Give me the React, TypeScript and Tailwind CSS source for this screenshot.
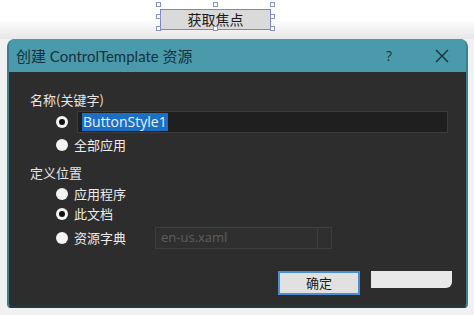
import React from 'react';

const cjk = '"Noto Sans CJK SC", "Noto Sans", sans-serif';
const latin = '"Open Sans", "Noto Sans CJK SC", sans-serif';
const title = 'Lato, "Noto Sans CJK SC", sans-serif';

type RadioProps = { checked?: boolean; label: string };

const Radio: React.FC<RadioProps> = ({ checked = false, label }) => (
  <div className="flex items-center gap-[6px]">
    <span className="w-[12px] h-[12px] rounded-full bg-[#f4f4f4] flex items-center justify-center">
      {checked && <span className="w-[6px] h-[6px] rounded-full bg-[#111]" />}
    </span>
    <span className="text-[13px] leading-[18px] text-[#ececec]">{label}</span>
  </div>
);

const Handle: React.FC<{ className: string }> = ({ className }) => (
  <span className={`absolute w-[5px] h-[5px] bg-white border border-[#8a8fc4] ${className}`} />
);

export default function App() {
  return (
    <div className="w-[474px] h-[315px] bg-[#f1f1f1] overflow-hidden" style={{ fontFamily: cjk }}>
      {/* designer surface */}
      <div className="h-[39px] bg-gradient-to-b from-white via-white to-[#e6e6e6] pl-[160px] pt-[6px]">
        <div className="relative w-[111px] h-[21px]">
          <button className="w-full h-full bg-[#dadada] border border-[#7f84c0] text-[14px] leading-[19px] text-[#1a1a1a]">
            获取焦点
          </button>
          <Handle className="-left-[4px] -top-[4px]" />
          <Handle className="left-[53px] -top-[4px]" />
          <Handle className="-right-[4px] -top-[4px]" />
          <Handle className="-left-[4px] top-[8px]" />
          <Handle className="-right-[4px] top-[8px]" />
          <Handle className="-left-[4px] -bottom-[4px]" />
          <Handle className="left-[53px] -bottom-[4px]" />
          <Handle className="-right-[4px] -bottom-[4px]" />
        </div>
      </div>

      {/* dialog */}
      <div className="ml-[7px] w-[461px] h-[269px] flex flex-col rounded-t-[8px] rounded-b-[4px] bg-[#4a99ab] border-x-2 border-b-2 border-[#3a7f8d] border-b-[#1f3b42] overflow-hidden">
        <div className="h-[33px] shrink-0 flex items-center pl-[7px] bg-[#4b9aac] text-[#16313a]">
          <span className="text-[15px] leading-[20px]" style={{ fontFamily: title }}>
            创建 ControlTemplate 资源
          </span>
          <span className="ml-auto w-[20px] text-center text-[14px]" style={{ fontFamily: latin }}>?</span>
          <span className="ml-[33px] mr-[14px] w-[20px] flex justify-center">
            <svg width="14" height="14" viewBox="0 0 14 14" stroke="#16313a" strokeWidth="1.4" fill="none">
              <path d="M1 1 L13 13 M13 1 L1 13" />
            </svg>
          </span>
        </div>

        <div className="flex-1 bg-[#2d2d2d] pl-[21px] pr-[14px] pt-[19px] flex flex-col">
          <div className="text-[13px] leading-[18px] text-[#e6e6e6]">名称(关键字)</div>

          <div className="mt-[2px] ml-[26px] mr-[4px] flex items-center h-[22px]">
            <span className="w-[12px] h-[12px] rounded-full bg-[#f4f4f4] flex items-center justify-center">
              <span className="w-[6px] h-[6px] rounded-full bg-[#111]" />
            </span>
            <div className="ml-[9px] flex-1 h-[22px] bg-[#1f1f1f] border border-[#3c3c3c] flex items-center pl-[4px]">
              <span
                className="bg-[#1c6fc2] text-[#e8f2ff] text-[14px] leading-[18px] px-[1px]"
                style={{ fontFamily: latin }}
              >
                ButtonStyle1
              </span>
            </div>
          </div>

          <div className="mt-[3px] ml-[26px]">
            <Radio label="全部应用" />
          </div>

          <div className="mt-[10px] text-[13px] leading-[18px] text-[#e6e6e6]">定义位置</div>

          <div className="mt-[3px] ml-[26px] flex flex-col gap-[2px]">
            <Radio label="应用程序" />
            <Radio checked label="此文档" />
          </div>

          <div className="mt-[4px] ml-[26px] flex items-center h-[22px]">
            <Radio label="资源字典" />
            <div className="ml-[29px] w-[177px] h-[22px] border border-[#3e3e3e] bg-[#2f2f2f] flex items-center">
              <span className="flex-1 pl-[5px] text-[13px] text-[#5e5e5e]" style={{ fontFamily: latin }}>
                en-us.xaml
              </span>
              <span className="w-[14px] h-full border-l border-[#3e3e3e]" />
            </div>
          </div>

          <div className="mt-[22px] flex justify-end gap-[11px]">
            <button className="w-[82px] h-[24px] bg-[#e1e1e1] border-2 border-[#4a8fd6] text-[13px] leading-[18px] text-[#1a1a1a]">
              确定
            </button>
            <button className="w-[81px] h-[17px] bg-[#e9e9e9] rounded-br-[6px]" />
          </div>
        </div>
      </div>
    </div>
  );
}
